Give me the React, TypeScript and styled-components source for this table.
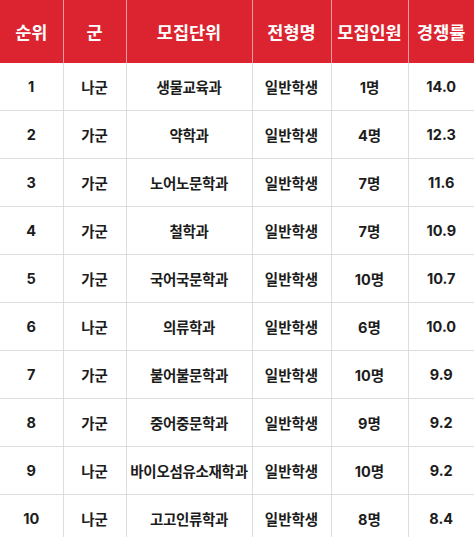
import { createGlobalStyle, styled } from "styled-components";

type Row = {
  rank: number;
  group: string;
  unit: string;
  type: string;
  quota: string;
  rate: string;
};

const rows: Row[] = [
  { rank: 1, group: "나군", unit: "생물교육과", type: "일반학생", quota: "1명", rate: "14.0" },
  { rank: 2, group: "가군", unit: "약학과", type: "일반학생", quota: "4명", rate: "12.3" },
  { rank: 3, group: "가군", unit: "노어노문학과", type: "일반학생", quota: "7명", rate: "11.6" },
  { rank: 4, group: "가군", unit: "철학과", type: "일반학생", quota: "7명", rate: "10.9" },
  { rank: 5, group: "가군", unit: "국어국문학과", type: "일반학생", quota: "10명", rate: "10.7" },
  { rank: 6, group: "나군", unit: "의류학과", type: "일반학생", quota: "6명", rate: "10.0" },
  { rank: 7, group: "가군", unit: "불어불문학과", type: "일반학생", quota: "10명", rate: "9.9" },
  { rank: 8, group: "가군", unit: "중어중문학과", type: "일반학생", quota: "9명", rate: "9.2" },
  { rank: 9, group: "나군", unit: "바이오섬유소재학과", type: "일반학생", quota: "10명", rate: "9.2" },
  { rank: 10, group: "나군", unit: "고고인류학과", type: "일반학생", quota: "8명", rate: "8.4" },
];

const headers = ["순위", "군", "모집단위", "전형명", "모집인원", "경쟁률"];
const widths = [63, 63, 126, 79, 77, 66];

export default function App() {
  return (
    <>
      <GlobalStyle />
      <Table>
        <colgroup>
          {widths.map((w, i) => (
            <col key={i} style={{ width: w }} />
          ))}
        </colgroup>
        <thead>
          <tr>
            {headers.map((h) => (
              <HeadCell key={h}>{h}</HeadCell>
            ))}
          </tr>
        </thead>
        <tbody>
          {rows.map((r) => (
            <tr key={r.rank}>
              <Cell>{r.rank}</Cell>
              <Cell>{r.group}</Cell>
              <Cell $tight>{r.unit}</Cell>
              <Cell>{r.type}</Cell>
              <Cell>{r.quota}</Cell>
              <Cell>{r.rate}</Cell>
            </tr>
          ))}
        </tbody>
      </Table>
    </>
  );
}

const GlobalStyle = createGlobalStyle`
  body {
    margin: 0;
    background: #ffffff;
    font-family: Inter, "Noto Sans CJK KR", sans-serif;
  }
`;

const Table = styled.table`
  width: 474px;
  table-layout: fixed;
  border-collapse: collapse;
`;

const HeadCell = styled.th`
  height: 63px;
  padding: 0;
  background: #dc2430;
  color: #ffffff;
  font-size: 17.5px;
  font-weight: 700;
  text-align: center;
  white-space: nowrap;
  border-left: 1px solid rgba(255, 255, 255, 0.55);
  &:first-child {
    border-left: none;
  }
`;

const Cell = styled.td<{ $tight?: boolean }>`
  height: 47px;
  padding: 0;
  color: #1c1c1c;
  font-size: 14.5px;
  font-weight: 700;
  text-align: center;
  white-space: nowrap;
  letter-spacing: ${(p) => (p.$tight ? "-0.3px" : "0")};
  border-left: 1px solid #dedede;
  border-bottom: 1px solid #dedede;
  &:first-child {
    border-left: none;
  }
`;
